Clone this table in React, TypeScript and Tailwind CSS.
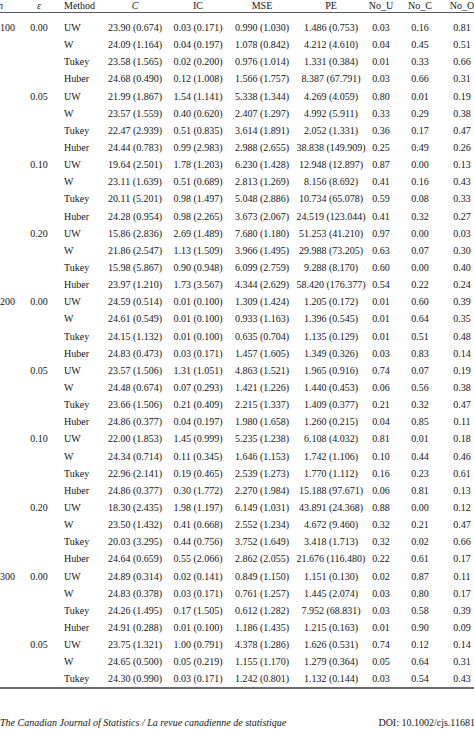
import React from "react";

type Row = [string, string, string, string, string, string, string, string];

// [method, C, IC, MSE, PE, No_U, No_C, No_O]
const blocks: { n: string; eps: string; rows: Row[] }[] = [
  {
    n: "100",
    eps: "0.00",
    rows: [
      ["UW", "23.90 (0.674)", "0.03 (0.171)", "0.990 (1.030)", "1.486 (0.753)", "0.03", "0.16", "0.81"],
      ["W", "24.09 (1.164)", "0.04 (0.197)", "1.078 (0.842)", "4.212 (4.610)", "0.04", "0.45", "0.51"],
      ["Tukey", "23.58 (1.565)", "0.02 (0.200)", "0.976 (1.014)", "1.331 (0.384)", "0.01", "0.33", "0.66"],
      ["Huber", "24.68 (0.490)", "0.12 (1.008)", "1.566 (1.757)", "8.387 (67.791)", "0.03", "0.66", "0.31"],
    ],
  },
  {
    n: "",
    eps: "0.05",
    rows: [
      ["UW", "21.99 (1.867)", "1.54 (1.141)", "5.338 (1.344)", "4.269 (4.059)", "0.80", "0.01", "0.19"],
      ["W", "23.57 (1.559)", "0.40 (0.620)", "2.407 (1.297)", "4.992 (5.911)", "0.33", "0.29", "0.38"],
      ["Tukey", "22.47 (2.939)", "0.51 (0.835)", "3.614 (1.891)", "2.052 (1.331)", "0.36", "0.17", "0.47"],
      ["Huber", "24.44 (0.783)", "0.99 (2.983)", "2.988 (2.655)", "38.838 (149.909)", "0.25", "0.49", "0.26"],
    ],
  },
  {
    n: "",
    eps: "0.10",
    rows: [
      ["UW", "19.64 (2.501)", "1.78 (1.203)", "6.230 (1.428)", "12.948 (12.897)", "0.87", "0.00", "0.13"],
      ["W", "23.11 (1.639)", "0.51 (0.689)", "2.813 (1.269)", "8.156 (8.692)", "0.41", "0.16", "0.43"],
      ["Tukey", "20.11 (5.201)", "0.98 (1.497)", "5.048 (2.886)", "10.734 (65.078)", "0.59", "0.08", "0.33"],
      ["Huber", "24.28 (0.954)", "0.98 (2.265)", "3.673 (2.067)", "24.519 (123.044)", "0.41", "0.32", "0.27"],
    ],
  },
  {
    n: "",
    eps: "0.20",
    rows: [
      ["UW", "15.86 (2.836)", "2.69 (1.489)", "7.680 (1.180)", "51.253 (41.210)", "0.97", "0.00", "0.03"],
      ["W", "21.86 (2.547)", "1.13 (1.509)", "3.966 (1.495)", "29.988 (73.205)", "0.63", "0.07", "0.30"],
      ["Tukey", "15.98 (5.867)", "0.90 (0.948)", "6.099 (2.759)", "9.288 (8.170)", "0.60", "0.00", "0.40"],
      ["Huber", "23.97 (1.210)", "1.73 (3.567)", "4.344 (2.629)", "58.420 (176.377)", "0.54", "0.22", "0.24"],
    ],
  },
  {
    n: "200",
    eps: "0.00",
    rows: [
      ["UW", "24.59 (0.514)", "0.01 (0.100)", "1.309 (1.424)", "1.205 (0.172)", "0.01", "0.60", "0.39"],
      ["W", "24.61 (0.549)", "0.01 (0.100)", "0.933 (1.163)", "1.396 (0.545)", "0.01", "0.64", "0.35"],
      ["Tukey", "24.15 (1.132)", "0.01 (0.100)", "0.635 (0.704)", "1.135 (0.129)", "0.01", "0.51", "0.48"],
      ["Huber", "24.83 (0.473)", "0.03 (0.171)", "1.457 (1.605)", "1.349 (0.326)", "0.03", "0.83", "0.14"],
    ],
  },
  {
    n: "",
    eps: "0.05",
    rows: [
      ["UW", "23.57 (1.506)", "1.31 (1.051)", "4.863 (1.521)", "1.965 (0.916)", "0.74", "0.07", "0.19"],
      ["W", "24.48 (0.674)", "0.07 (0.293)", "1.421 (1.226)", "1.440 (0.453)", "0.06", "0.56", "0.38"],
      ["Tukey", "23.66 (1.506)", "0.21 (0.409)", "2.215 (1.337)", "1.409 (0.377)", "0.21", "0.32", "0.47"],
      ["Huber", "24.86 (0.377)", "0.04 (0.197)", "1.980 (1.658)", "1.260 (0.215)", "0.04", "0.85", "0.11"],
    ],
  },
  {
    n: "",
    eps: "0.10",
    rows: [
      ["UW", "22.00 (1.853)", "1.45 (0.999)", "5.235 (1.238)", "6.108 (4.032)", "0.81", "0.01", "0.18"],
      ["W", "24.34 (0.714)", "0.11 (0.345)", "1.646 (1.153)", "1.742 (1.106)", "0.10", "0.44", "0.46"],
      ["Tukey", "22.96 (2.141)", "0.19 (0.465)", "2.539 (1.273)", "1.770 (1.112)", "0.16", "0.23", "0.61"],
      ["Huber", "24.86 (0.377)", "0.30 (1.772)", "2.270 (1.984)", "15.188 (97.671)", "0.06", "0.81", "0.13"],
    ],
  },
  {
    n: "",
    eps: "0.20",
    rows: [
      ["UW", "18.30 (2.435)", "1.98 (1.197)", "6.149 (1.031)", "43.891 (24.368)", "0.88", "0.00", "0.12"],
      ["W", "23.50 (1.432)", "0.41 (0.668)", "2.552 (1.234)", "4.672 (9.460)", "0.32", "0.21", "0.47"],
      ["Tukey", "20.03 (3.295)", "0.44 (0.756)", "3.752 (1.649)", "3.418 (1.713)", "0.32", "0.02", "0.66"],
      ["Huber", "24.64 (0.659)", "0.55 (2.066)", "2.862 (2.055)", "21.676 (116.480)", "0.22", "0.61", "0.17"],
    ],
  },
  {
    n: "300",
    eps: "0.00",
    rows: [
      ["UW", "24.89 (0.314)", "0.02 (0.141)", "0.849 (1.150)", "1.151 (0.130)", "0.02", "0.87", "0.11"],
      ["W", "24.83 (0.378)", "0.03 (0.171)", "0.761 (1.257)", "1.445 (2.074)", "0.03", "0.80", "0.17"],
      ["Tukey", "24.26 (1.495)", "0.17 (1.505)", "0.612 (1.282)", "7.952 (68.831)", "0.03", "0.58", "0.39"],
      ["Huber", "24.91 (0.288)", "0.01 (0.100)", "1.186 (1.435)", "1.215 (0.163)", "0.01", "0.90", "0.09"],
    ],
  },
  {
    n: "",
    eps: "0.05",
    rows: [
      ["UW", "23.75 (1.321)", "1.00 (0.791)", "4.378 (1.286)", "1.626 (0.531)", "0.74", "0.12", "0.14"],
      ["W", "24.65 (0.500)", "0.05 (0.219)", "1.155 (1.170)", "1.279 (0.364)", "0.05", "0.64", "0.31"],
      ["Tukey", "24.30 (0.990)", "0.03 (0.171)", "1.242 (0.801)", "1.132 (0.144)", "0.03", "0.54", "0.43"],
    ],
  },
];

const cols =
  "grid grid-cols-[22px_34px_48px_62px_64px_64px_74px_26px_52px_32px] items-center whitespace-nowrap";

export default function App() {
  return (
    <div
      className="w-[474px] h-[729px] overflow-hidden bg-white text-[#161616] text-[10px]"
      style={{ fontFamily: '"Liberation Serif", "Times New Roman", serif' }}
    >
      <div className="w-[478px]">
        {/* Header */}
        <div className={`${cols} h-[13px] leading-none border-b border-[#5a5a5a]`}>
          <span className="italic -ml-[2px]">n</span>
          <span className="text-center italic">ε</span>
          <span className="pl-[8px]">Method</span>
          <span className="text-center italic">C</span>
          <span className="text-center">IC</span>
          <span className="text-center">MSE</span>
          <span className="text-center">PE</span>
          <span className="text-center">No_U</span>
          <span className="text-center">No_C</span>
          <span className="text-center">No_O</span>
        </div>

        {/* Body */}
        <div className="pt-[6px] border-b-2 border-[#6b6b6b]">
          {blocks.map((b, bi) =>
            b.rows.map((r, ri) => (
              <div key={`${bi}-${ri}`} className={`${cols} h-[17.15px]`}>
                <span>{ri === 0 ? b.n : ""}</span>
                <span className="text-center">{ri === 0 ? b.eps : ""}</span>
                <span className="pl-[8px]">{r[0]}</span>
                <span className="text-center">{r[1]}</span>
                <span className="text-center">{r[2]}</span>
                <span className="text-center">{r[3]}</span>
                <span className="text-center">{r[4]}</span>
                <span className="text-center">{r[5]}</span>
                <span className="text-center">{r[6]}</span>
                <span className="text-center">{r[7]}</span>
              </div>
            ))
          )}
        </div>
      </div>

      {/* Footer */}
      <div className="mt-[26px] flex justify-between items-center -mr-[1px]">
        <span className="italic">
          The Canadian Journal of Statistics / La revue canadienne de statistique
        </span>
        <span>DOI: 10.1002/cjs.11681</span>
      </div>
    </div>
  );
}
